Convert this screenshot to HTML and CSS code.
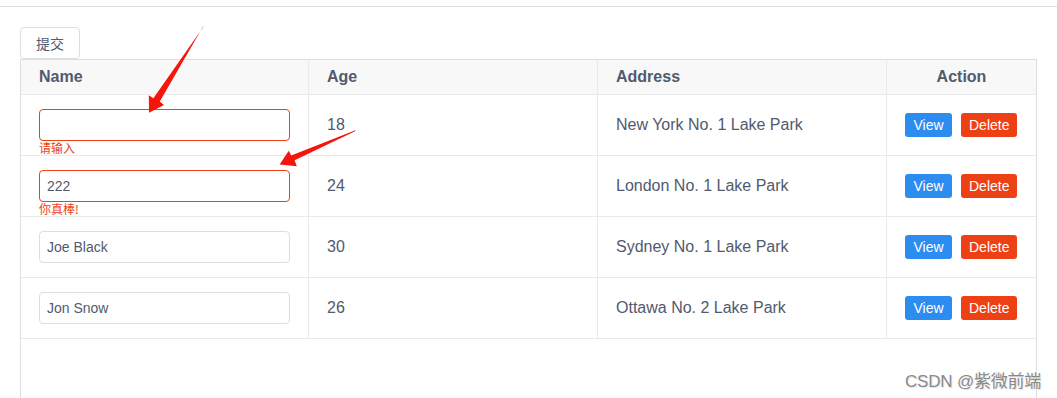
FILE: index.html
```html
<!DOCTYPE html>
<html lang="zh-CN">
<head>
<meta charset="utf-8">
<title>Table form</title>
<link rel="stylesheet" href="styles.css">
</head>
<body>
<div class="topline"></div>
<main class="page">
  <button class="btn-submit" type="button">提交</button>
  <div class="table">
    <div class="th">Name</div>
    <div class="th">Age</div>
    <div class="th">Address</div>
    <div class="th th-center">Action</div>

    <div class="td"><div class="field"><input class="input input-error" type="text" value=""><span class="tip">请输入</span></div></div>
    <div class="td">18</div>
    <div class="td">New York No. 1 Lake Park</div>
    <div class="td td-center"><button class="btn btn-view" type="button">View</button><button class="btn btn-delete" type="button">Delete</button></div>

    <div class="td"><div class="field"><input class="input input-error" type="text" value="222"><span class="tip">你真棒!</span></div></div>
    <div class="td">24</div>
    <div class="td">London No. 1 Lake Park</div>
    <div class="td td-center"><button class="btn btn-view" type="button">View</button><button class="btn btn-delete" type="button">Delete</button></div>

    <div class="td"><div class="field"><input class="input" type="text" value="Joe Black"></div></div>
    <div class="td">30</div>
    <div class="td">Sydney No. 1 Lake Park</div>
    <div class="td td-center"><button class="btn btn-view" type="button">View</button><button class="btn btn-delete" type="button">Delete</button></div>

    <div class="td"><div class="field"><input class="input" type="text" value="Jon Snow"></div></div>
    <div class="td">26</div>
    <div class="td">Ottawa No. 2 Lake Park</div>
    <div class="td td-center"><button class="btn btn-view" type="button">View</button><button class="btn btn-delete" type="button">Delete</button></div>
  </div>
</main>
<svg class="arrows" width="1057" height="398" viewBox="0 0 1057 398" aria-hidden="true">
  <polygon points="204,26 202.5,27.5 159.8,101.5 164,105 149,112.8 148.8,95.2 153.4,98.3" fill="#f5150b"/>
  <polygon points="356,130 354.5,131.5 294.6,160.2 296.8,166.2 279.6,164.6 288.8,150.8 291.2,155.4" fill="#f5150b"/>
</svg>
<div class="watermark">CSDN @紫微前端</div>
</body>
</html>
```

FILE: styles.css
```css
html, body {
  margin: 0;
  padding: 0;
  background: #fff;
  font-family: "Liberation Sans", Arial, "Noto Sans CJK SC", sans-serif;
  color: #515a6e;
  overflow: hidden;
  height: 398px;
}

.topline {
  margin-top: 6px;
  height: 0;
  border-top: 1px solid #e0e0e0;
}

.page {
  padding: 20px 0 0 20px;
  display: flex;
  flex-direction: column;
  align-items: flex-start;
}

.btn-submit {
  height: 32px;
  width: 60px;
  padding: 0;
  border: 1px solid #dcdee2;
  border-radius: 4px;
  background: #fff;
  color: #515a6e;
  font-family: "Liberation Sans", "Noto Sans CJK SC", sans-serif;
  font-size: 14px;
}

.table {
  width: 1017px;
  box-sizing: border-box;
  height: 339px;
  border: 1px solid #dcdee2;
  border-bottom: 0;
  display: grid;
  grid-template-columns: 288px 289px 289px 1fr;
  grid-template-rows: 35px repeat(4, 61px);
  align-content: start;
}

.th, .td {
  box-sizing: border-box;
  border-bottom: 1px solid #e8eaec;
  border-right: 1px solid #e8eaec;
  padding: 0 18px;
  display: flex;
  align-items: center;
  font-size: 16px;
}

.th:nth-child(4n), .td:nth-child(4n) {
  border-right: 0;
}

.th {
  background: #f8f8f9;
  font-weight: bold;
}

.th-center, .td-center {
  justify-content: center;
  padding-left: 0;
  padding-right: 0;
}

.td-center {
  gap: 9px;
  padding-bottom: 1px;
  padding-right: 1px;
}

.field {
  position: relative;
  width: 100%;
  margin-bottom: 1px;
}

.input {
  box-sizing: border-box;
  display: block;
  width: 100%;
  height: 32px;
  border: 1px solid #dcdee2;
  border-radius: 4px;
  padding: 0 7px;
  font-family: "Liberation Sans", Arial, sans-serif;
  font-size: 14px;
  color: #515a6e;
  background: #fff;
  outline: none;
}

.input-error {
  border-color: #ed4014;
}

.tip {
  position: absolute;
  left: 0;
  top: 100%;
  font-size: 12px;
  line-height: 13px;
  color: #ed4014;
  font-family: "Noto Sans CJK SC", "Liberation Sans", sans-serif;
}

.btn {
  height: 24px;
  padding: 0 8px;
  border: 0;
  border-radius: 3px;
  color: #fff;
  font-family: "Liberation Sans", Arial, sans-serif;
  font-size: 14px;
  line-height: 24px;
}

.btn-view {
  background: #2d8cf0;
  width: 47px;
}

.btn-delete {
  background: #ed4014;
  width: 56px;
}

.arrows {
  position: absolute;
  left: 0;
  top: 0;
  pointer-events: none;
}

.watermark {
  position: absolute;
  left: 905px;
  top: 367px;
  font-family: "Liberation Sans", "Noto Sans CJK SC", sans-serif;
  font-size: 17px;
  letter-spacing: -0.2px;
  color: #8a8a8a;
  text-shadow: 1px 1px 1px #e2e2e2;
  white-space: nowrap;
}
```
